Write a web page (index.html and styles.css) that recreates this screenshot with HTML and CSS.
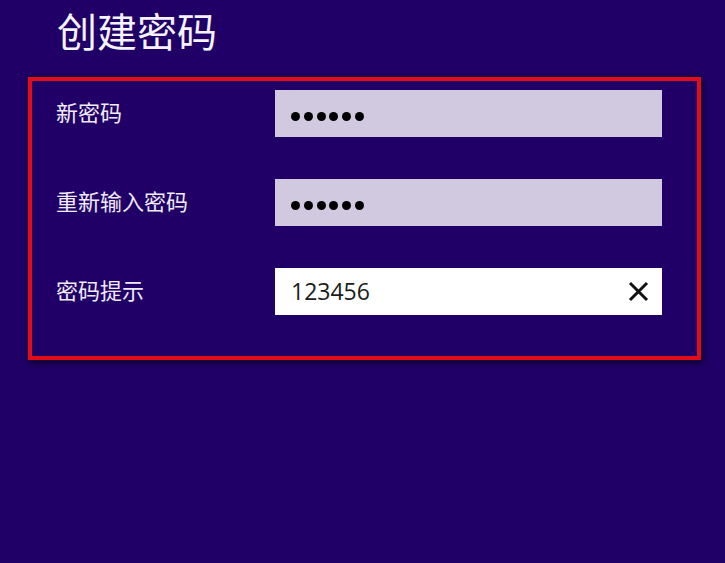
FILE: index.html
```html
<!DOCTYPE html>
<html lang="zh-CN">
<head>
<meta charset="utf-8">
<title>创建密码</title>
<link rel="stylesheet" href="styles.css">
</head>
<body>
<div class="page">
  <h1 class="title">创建密码</h1>
  <div class="panel">
    <div class="row">
      <div class="label">新密码</div>
      <div class="field field-pass"><span class="dots"><i></i><i></i><i></i><i></i><i></i><i></i></span></div>
    </div>
    <div class="row">
      <div class="label">重新输入密码</div>
      <div class="field field-pass"><span class="dots"><i></i><i></i><i></i><i></i><i></i><i></i></span></div>
    </div>
    <div class="row">
      <div class="label">密码提示</div>
      <div class="field field-text">
        <span class="value">123456</span>
        <svg class="clear" width="21" height="21" viewBox="0 0 21 21"><path d="M2 2 L19 19 M19 2 L2 19" stroke="#111" stroke-width="3" stroke-linecap="butt" fill="none"/></svg>
      </div>
    </div>
  </div>
</div>
</body>
</html>
```
FILE: styles.css
```css
html, body {
  margin: 0;
  padding: 0;
  background: #200066;
  height: 100%;
}
.page {
  font-family: "Noto Sans CJK SC", "Noto Sans", sans-serif;
  color: #ffffff;
}
.title {
  margin: 10px 0 0 0;
  padding-left: 57px;
  font-size: 40px;
  line-height: 40px;
  font-weight: 400;
  color: #f4f2fa;
}
.panel {
  margin: 27px 0 0 28px;
  width: 673px;
  box-sizing: border-box;
  border: 4px solid #e20d18;
  box-shadow: 2px 3px 6px rgba(0, 0, 0, 0.55), 0 -1px 3px rgba(0, 0, 0, 0.35);
  padding: 9px 35px 41px 24px;
  display: flex;
  flex-direction: column;
  gap: 42px;
}
.row {
  display: flex;
  align-items: center;
  height: 47px;
}
.label {
  width: 219px;
  font-size: 22px;
  line-height: 40px;
  padding-bottom: 6px;
  font-weight: 400;
  color: #efeaf7;
}
.field {
  flex: 1;
  height: 47px;
  display: flex;
  align-items: center;
  box-sizing: border-box;
  padding: 0 13px 0 16px;
}
.field-pass {
  background: #d0c9e0;
}
.field-text {
  background: #ffffff;
  justify-content: space-between;
}
.dots {
  display: flex;
  gap: 3.8px;
  margin-top: 6px;
}
.dots i {
  display: block;
  width: 9px;
  height: 9px;
  border-radius: 50%;
  background: #000;
}
.value {
  font-family: "Open Sans", "Noto Sans", sans-serif;
  font-size: 23px;
  color: #1c1c1c;
  line-height: 47px;
}
.clear {
  display: block;
}
```
